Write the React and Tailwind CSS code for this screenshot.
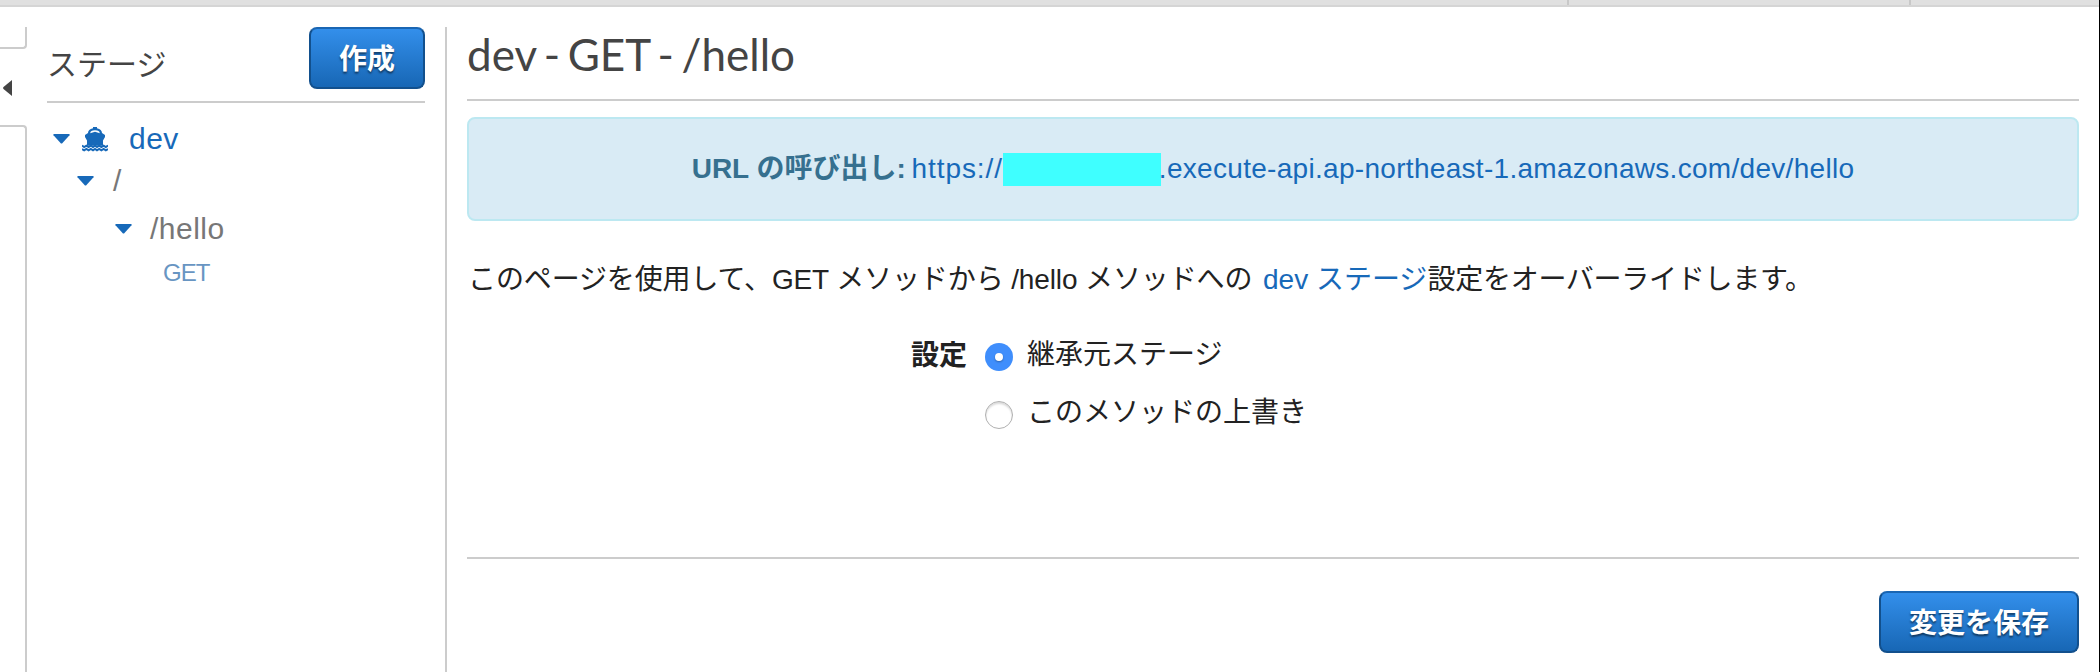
import React from 'react';

function Caret({ className = '' }) {
  return (
    <svg className={`w-[17px] h-[10px] shrink-0 ${className}`} viewBox="0 0 17 10" fill="#1769b9">
      <path d="M0.8 0H16.2Q17 0.4 16.5 1.2L9.5 9Q8.5 10 7.5 9L0.5 1.2Q0 0.4 0.8 0Z" />
    </svg>
  );
}

function ShipIcon() {
  return (
    <svg className="w-[26px] h-[25px] shrink-0" viewBox="0 0 26 25" fill="#1769b9">
      <path d="M11 0H15V1.2C18.4 1.8 19.8 3.4 20 6L23 8V10L21 13.6V18.8H5V13.6L3 10V8L6 6C6.2 3.4 7.6 1.8 11 1.2Z" />
      <path d="M8.2 6.2C8.5 4.2 9.8 3.3 13 3.3S17.5 4.2 17.8 6.2L13 4.8Z" fill="#fff" />
      <g fill="none" stroke="#1769b9" strokeWidth="2">
        <path d="M0 18.6L2.2 20L4.4 18.6L6.6 20L8.8 18.6L11 20L13 18.6L15 20L17.2 18.6L19.4 20L21.6 18.6L23.8 20L26 18.6" />
        <path d="M0 22L2.2 23.4L4.4 22L6.6 23.4L8.8 22L11 23.4L13 22L15 23.4L17.2 22L19.4 23.4L21.6 22L23.8 23.4L26 22" />
      </g>
    </svg>
  );
}

function PrimaryButton({ children, className = '' }) {
  return (
    <button
      className={`h-[62px] shrink-0 pt-1 rounded-lg border-2 border-[#12508d] border-t-[#1a66b3] bg-linear-to-b from-[#338feb] to-[#1767b5] text-[28px] leading-[54px] font-bold text-white [text-shadow:0_2px_2px_rgba(0,0,0,0.5)] ${className}`}
    >
      {children}
    </button>
  );
}

function CollapseRail() {
  return (
    <div className="w-[27px] shrink-0 pt-5 flex flex-col">
      <div className="h-[22px] border-r-2 border-b-2 border-[#ccc] rounded-br-sm" />
      <div className="h-[76px] pt-[31px] pl-[3px]">
        <svg className="w-[9px] h-4" viewBox="0 0 9 16" fill="#444">
          <path d="M9 0V16L0.5 9Q-0.3 8 0.5 7Z" />
        </svg>
      </div>
      <div className="flex-1 border-r-2 border-t-2 border-[#ccc] rounded-tr-sm" />
    </div>
  );
}

function StageTree() {
  return (
    <div className="text-[30px] leading-[34px] text-[#777]">
      <div className="flex items-center mt-[19px] pl-[6px] text-[#1769b9]">
        <Caret />
        <span className="ml-3">
          <ShipIcon />
        </span>
        <span className="ml-[21px] tracking-[0.5px]">dev</span>
      </div>
      <div className="flex items-center mt-2 pl-[30px]">
        <Caret />
        <span className="ml-[19px]">/</span>
      </div>
      <div className="flex items-center mt-[14px] pl-[68px]">
        <Caret />
        <span className="ml-[18px] tracking-[0.5px]">/hello</span>
      </div>
      <div className="mt-[10px] pl-[116px] text-2xl leading-[34px] tracking-[-1px] text-[#6895c2]">GET</div>
    </div>
  );
}

function Sidebar() {
  return (
    <aside className="w-[420px] shrink-0 mt-5 pl-5 pr-5 border-r-2 border-[#ccc]">
      <div className="flex justify-between h-[76px] border-b-2 border-[#ccc]">
        <h2 className="pt-[18px] text-[30px] leading-10 text-[#444]">ステージ</h2>
        <PrimaryButton className="w-[116px]">作成</PrimaryButton>
      </div>
      <StageTree />
    </aside>
  );
}

function RadioOption({ checked, label }) {
  return (
    <label className="flex items-center h-[58px]">
      {checked ? (
        <span className="w-7 h-7 rounded-full bg-[#3f8efc] flex items-center justify-center">
          <span className="w-2 h-2 rounded-full bg-white shadow-[0_1px_2px_rgba(0,0,0,0.3)]" />
        </span>
      ) : (
        <span className="w-7 h-7 rounded-full border border-[#b0b0b0] bg-white shadow-[inset_0_2px_2px_rgba(0,0,0,0.15)]" />
      )}
      <span className="ml-[14px] -mt-1">{label}</span>
    </label>
  );
}

function StageDetail() {
  return (
    <main className="flex-1 pt-5 pl-5 pr-5 text-[28px] text-[#222]">
      <h1 className="h-[74px] border-b-2 border-[#ccc] font-[Lato,sans-serif] text-[44px] leading-[54px] [word-spacing:-3.6px] text-[#444]">
        dev - GET - /hello
      </h1>

      <div className="mt-4 h-[104px] rounded-lg border-2 border-[#bce8f1] bg-[#d9ebf5] flex items-center justify-center whitespace-pre text-[#1769b9]">
        <span className="font-bold text-[#36708f]">URL の呼び出し: </span>
        <span className="ml-[-2px] tracking-[0.9px]">https://</span>
        <span className="w-[158px] h-[33px] bg-[#3fffff]" />
        <span className="ml-[-2px] tracking-[0.3px]">.execute-api.ap-northeast-1.amazonaws.com/dev/hello</span>
      </div>

      <p className="mt-[38px] pl-px leading-[42px]">
        <span className="tracking-[-0.12px]">このページを使用して、GET メソッドから /hello メソッドへの </span>
        <span className="ml-[3px] text-[#1769b9]">dev ステージ</span>
        <span className="tracking-[-0.25px]">設定をオーバーライドします。</span>
      </p>

      <div className="mt-7 flex h-[230px] border-b-2 border-[#ccc]">
        <div className="w-[500px] h-[58px] leading-[54px] text-right font-bold">設定</div>
        <div className="ml-[18px] -mt-px">
          <RadioOption checked label="継承元ステージ" />
          <RadioOption label="このメソッドの上書き" />
        </div>
      </div>

      <div className="flex justify-end mt-8">
        <PrimaryButton className="w-[200px]">変更を保存</PrimaryButton>
      </div>
    </main>
  );
}

export default function App() {
  return (
    <div className="w-[2100px] h-[672px] overflow-hidden flex flex-col bg-white border-r border-black font-['Liberation_Sans','Noto_Sans_CJK_JP',sans-serif]">
      <div className="h-[7px] shrink-0 flex bg-[#e0e0e0] border-b-2 border-[#d5d5d5]">
        <div className="w-[1569px] border-r-2 border-[#c8c8c8]" />
        <div className="w-[342px] border-r-2 border-[#c8c8c8]" />
      </div>
      <div className="flex-1 flex">
        <CollapseRail />
        <Sidebar />
        <StageDetail />
      </div>
    </div>
  );
}
